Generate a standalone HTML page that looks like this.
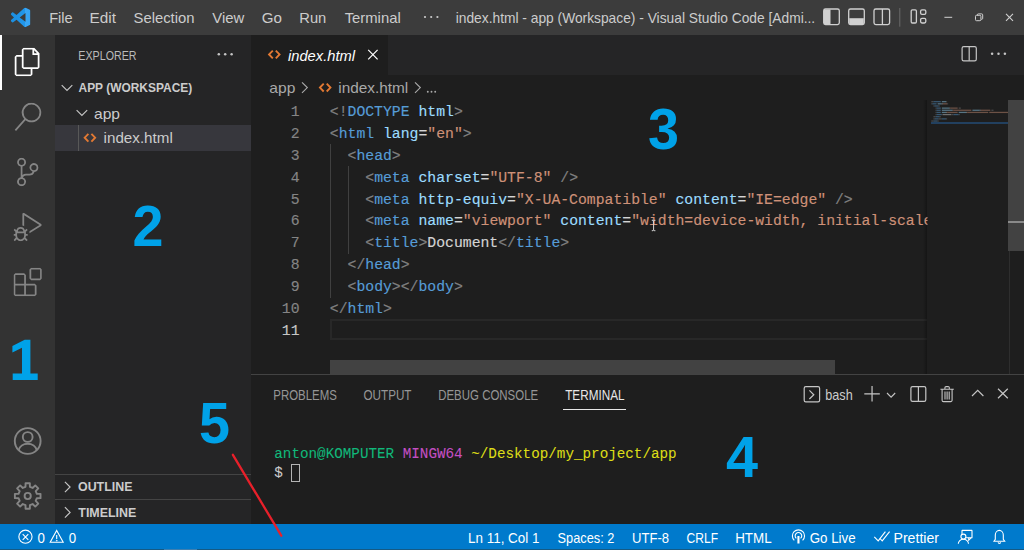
<!DOCTYPE html>
<html lang="en">
<head>
<meta charset="UTF-8">
<title>index.html - app (Workspace) - Visual Studio Code</title>
<style>
*{box-sizing:border-box;margin:0;padding:0}
html,body{width:1024px;height:550px;overflow:hidden;background:#1e1e1e;font-family:"Liberation Sans",sans-serif;color:#ccc}
.abs{position:absolute}
#titlebar{position:absolute;left:0;top:0;width:1024px;height:35px;background:#3c3c3c}
#activity{position:absolute;left:0;top:35px;width:56px;height:489px;background:#333333;border-right:1px solid #2c2c2c}
#activity .ind{position:absolute;left:0;top:0;width:2px;height:55px;background:#fff}
#sidebar{position:absolute;left:55px;top:35px;width:196px;height:489px;background:#252526}
#tabs{position:absolute;left:251px;top:35px;width:773px;height:40px;background:#252526}
#tab1{position:absolute;left:0;top:0;width:137px;height:40px;background:#1e1e1e}
#editor{position:absolute;left:251px;top:75px;width:773px;height:299px;background:#1e1e1e;overflow:hidden}
#panel{position:absolute;left:251px;top:374px;width:773px;height:150px;background:#1e1e1e;border-top:1px solid #434343}
#status{position:absolute;left:0;top:524px;width:1024px;height:26px;background:#007acc;border-bottom:1px solid #155a84}
#ov{position:absolute;left:0;top:0;width:1024px;height:550px}
#ov text{font-family:"Liberation Sans",sans-serif;white-space:pre}
#ov .mono text, #ov text.mono{font-family:"Liberation Mono",monospace}
.g{fill:#808080;stroke:#808080}.b{fill:#569cd6;stroke:#569cd6}.l{fill:#9cdcfe;stroke:#9cdcfe}.o{fill:#ce9178;stroke:#ce9178}.w{fill:#d4d4d4;stroke:#d4d4d4}
#ov .mono{stroke-width:0.15px}
</style>
</head>
<body>
<div id="titlebar"></div>
<div id="activity"><div class="ind"></div></div>
<div id="sidebar">
  <div class="abs" style="left:0;top:90px;width:196px;height:26px;background:#37373d"></div>
  <div class="abs" style="left:23px;top:90px;width:1px;height:26px;background:#585858"></div>
  <div class="abs" style="left:0;top:439px;width:196px;height:1px;background:#444"></div>
  <div class="abs" style="left:0;top:464px;width:196px;height:1px;background:#444"></div>
</div>
<div id="tabs"><div id="tab1"></div></div>
<div id="editor">
  <!-- indent guides -->
  <div class="abs" style="left:79px;top:69px;width:1px;height:154px;background:#404040"></div>
  <div class="abs" style="left:97px;top:91px;width:1px;height:88px;background:#404040"></div>
  <!-- current line -->
  <div class="abs" style="left:79px;top:244px;width:597px;height:21px;border:2px solid #282828;border-right:none"></div>
  <!-- horizontal scrollbar -->
  <div class="abs" style="left:79px;top:285px;width:505px;height:14px;background:#424242"></div>
  <!-- minimap -->
  <div class="abs" style="left:672px;top:25px;width:4px;height:274px;background:linear-gradient(to right,rgba(0,0,0,0),rgba(0,0,0,0.3))"></div>
  <div class="abs" style="left:676px;top:25px;width:82px;height:274px;background:#1e1e1e"></div>
  <div class="abs" style="left:680px;top:46.6px;width:78px;height:2.2px;background:#22405f"></div>
  <!-- vertical scrollbar -->
  <div class="abs" style="left:758px;top:25px;width:1px;height:274px;background:#2e2e2e"></div>
  <div class="abs" style="left:757px;top:25px;width:16px;height:151px;background:#424242"></div>
  <div class="abs" style="left:757px;top:146px;width:16px;height:2px;background:#8a8a8a"></div>
</div>
<div id="panel">
  <div class="abs" style="left:312px;top:34px;width:63px;height:1px;background:#e7e7e7"></div>
  <div class="abs" style="left:40px;top:89px;width:9px;height:18px;border:1px solid #b4b4b4"></div>
</div>
<div id="status"><div class="abs" style="left:164px;top:25px;width:33px;height:1px;background:#3d7fb0"></div></div>
<svg id="ov" width="1024" height="550" viewBox="0 0 1024 550">
<!-- TITLE BAR TEXT -->
<g font-size="15" fill="#cccccc">
<text x="49.2" y="23.3" textLength="23.5" lengthAdjust="spacingAndGlyphs">File</text>
<text x="89.5" y="23.3" textLength="26.5" lengthAdjust="spacingAndGlyphs">Edit</text>
<text x="133.5" y="23.3" textLength="61" lengthAdjust="spacingAndGlyphs">Selection</text>
<text x="212.3" y="23.3" textLength="32" lengthAdjust="spacingAndGlyphs">View</text>
<text x="261.7" y="23.3" textLength="20.2" lengthAdjust="spacingAndGlyphs">Go</text>
<text x="299.3" y="23.3" textLength="27" lengthAdjust="spacingAndGlyphs">Run</text>
<text x="344.7" y="23.3" textLength="56" lengthAdjust="spacingAndGlyphs">Terminal</text>
<text x="455.7" y="23.3" textLength="359.5" lengthAdjust="spacingAndGlyphs">index.html - app (Workspace) - Visual Studio Code [Admi...</text>
</g>
<!-- SIDEBAR TEXT -->
<text x="78.3" y="60.1" font-size="13.3" fill="#bbbbbb" textLength="58.3" lengthAdjust="spacingAndGlyphs">EXPLORER</text>
<text x="78.5" y="92.1" font-size="13.2" font-weight="bold" fill="#cccccc" textLength="113.7" lengthAdjust="spacingAndGlyphs">APP (WORKSPACE)</text>
<text x="94" y="119" font-size="15" fill="#cccccc" textLength="26" lengthAdjust="spacingAndGlyphs">app</text>
<text x="103.6" y="143.4" font-size="15" fill="#cccccc" textLength="69.2" lengthAdjust="spacingAndGlyphs">index.html</text>
<text x="78" y="491.4" font-size="13" font-weight="bold" fill="#cccccc" textLength="54.5" lengthAdjust="spacingAndGlyphs">OUTLINE</text>
<text x="78.3" y="516.8" font-size="13" font-weight="bold" fill="#cccccc" textLength="58" lengthAdjust="spacingAndGlyphs">TIMELINE</text>
<!-- TAB + BREADCRUMBS -->
<text x="288" y="60.8" font-size="15" font-style="italic" fill="#ffffff" textLength="67" lengthAdjust="spacingAndGlyphs">index.html</text>
<g font-size="15" fill="#a9a9a9">
<text x="269.3" y="92.6" textLength="26" lengthAdjust="spacingAndGlyphs">app</text>
<text x="338.3" y="92.6" textLength="70" lengthAdjust="spacingAndGlyphs">index.html</text>
</g>
<!-- PANEL TEXT -->
<g font-size="14" fill="#969696">
<text x="273.3" y="400.4" textLength="63.5" lengthAdjust="spacingAndGlyphs">PROBLEMS</text>
<text x="363.5" y="400.4" textLength="48" lengthAdjust="spacingAndGlyphs">OUTPUT</text>
<text x="438.2" y="400.4" textLength="100" lengthAdjust="spacingAndGlyphs">DEBUG CONSOLE</text>
<text x="565.2" y="400.4" fill="#e7e7e7" textLength="59.3" lengthAdjust="spacingAndGlyphs">TERMINAL</text>
</g>
<text x="825.2" y="399.7" font-size="14.5" fill="#cccccc" textLength="27.5" lengthAdjust="spacingAndGlyphs">bash</text>
<!-- TERMINAL -->
<g class="mono" font-size="14.27" style="stroke-width:0.08px">
<text x="274.3" y="457.9" xml:space="preserve"><tspan fill="#11b87a" stroke="#11b87a">anton@KOMPUTER</tspan> <tspan fill="#c44fc4" stroke="#c44fc4">MINGW64</tspan> <tspan fill="#dddd17" stroke="#dddd17">~/Desktop/my_project/app</tspan></text>
<text x="274.3" y="477.4" fill="#cccccc" stroke="#cccccc">$</text>
</g>
<!-- STATUS TEXT -->
<g font-size="14.3" fill="#ffffff">
<text x="37.4" y="542.9" textLength="7.4" lengthAdjust="spacingAndGlyphs">0</text>
<text x="68.8" y="542.9" textLength="7.4" lengthAdjust="spacingAndGlyphs">0</text>
<text x="468" y="542.9" textLength="71.5" lengthAdjust="spacingAndGlyphs">Ln 11, Col 1</text>
<text x="557.6" y="542.9" textLength="56.8" lengthAdjust="spacingAndGlyphs">Spaces: 2</text>
<text x="632" y="542.9" textLength="37" lengthAdjust="spacingAndGlyphs">UTF-8</text>
<text x="686.5" y="542.9" textLength="31.5" lengthAdjust="spacingAndGlyphs">CRLF</text>
<text x="735.2" y="542.9" textLength="36.5" lengthAdjust="spacingAndGlyphs">HTML</text>
<text x="809.7" y="542.9" textLength="46" lengthAdjust="spacingAndGlyphs">Go Live</text>
<text x="893.5" y="542.9" textLength="45.5" lengthAdjust="spacingAndGlyphs">Prettier</text>
</g>
<!-- CODE -->
<g class="mono" font-size="14.780">
<g fill="#858585" stroke="#858585" text-anchor="end">
<text x="299.5" y="116.10">1</text>
<text x="299.5" y="137.97">2</text>
<text x="299.5" y="159.84">3</text>
<text x="299.5" y="181.71">4</text>
<text x="299.5" y="203.58">5</text>
<text x="299.5" y="225.45">6</text>
<text x="299.5" y="247.32">7</text>
<text x="299.5" y="269.19">8</text>
<text x="299.5" y="291.06">9</text>
<text x="299.5" y="312.93">10</text>
<text x="299.5" y="334.80" fill="#c6c6c6" stroke="#c6c6c6">11</text>
</g>
<g class="w" xml:space="preserve">
<text x="329.80" y="116.10"><tspan class="g">&lt;!</tspan><tspan class="b">DOCTYPE</tspan> <tspan class="l">html</tspan><tspan class="g">&gt;</tspan></text>
<text x="329.80" y="137.97"><tspan class="g">&lt;</tspan><tspan class="b">html</tspan> <tspan class="l">lang</tspan>=<tspan class="o">"en"</tspan><tspan class="g">&gt;</tspan></text>
<text x="347.54" y="159.84"><tspan class="g">&lt;</tspan><tspan class="b">head</tspan><tspan class="g">&gt;</tspan></text>
<text x="365.27" y="181.71"><tspan class="g">&lt;</tspan><tspan class="b">meta</tspan> <tspan class="l">charset</tspan>=<tspan class="o">"UTF-8"</tspan> <tspan class="g">/&gt;</tspan></text>
<text x="365.27" y="203.58"><tspan class="g">&lt;</tspan><tspan class="b">meta</tspan> <tspan class="l">http-equiv</tspan>=<tspan class="o">"X-UA-Compatible"</tspan> <tspan class="l">content</tspan>=<tspan class="o">"IE=edge"</tspan> <tspan class="g">/&gt;</tspan></text>
<text x="365.27" y="225.45" clip-path="url(#clipcode)"><tspan class="g">&lt;</tspan><tspan class="b">meta</tspan> <tspan class="l">name</tspan>=<tspan class="o">"viewport"</tspan> <tspan class="l">content</tspan>=<tspan class="o">"width=device-width, initial-scale=1.0"</tspan> <tspan class="g">/&gt;</tspan></text>
<text x="365.27" y="247.32"><tspan class="g">&lt;</tspan><tspan class="b">title</tspan><tspan class="g">&gt;</tspan>Document<tspan class="g">&lt;/</tspan><tspan class="b">title</tspan><tspan class="g">&gt;</tspan></text>
<text x="347.54" y="269.19"><tspan class="g">&lt;/</tspan><tspan class="b">head</tspan><tspan class="g">&gt;</tspan></text>
<text x="347.54" y="291.06"><tspan class="g">&lt;</tspan><tspan class="b">body</tspan><tspan class="g">&gt;&lt;/</tspan><tspan class="b">body</tspan><tspan class="g">&gt;</tspan></text>
<text x="329.80" y="312.93"><tspan class="g">&lt;/</tspan><tspan class="b">html</tspan><tspan class="g">&gt;</tspan></text>
</g></g>
<g opacity="0.45" clip-path="url(#clipmm)">
<rect x="931.30" y="101.05" width="2.11" height="1.25" fill="#808080"/>
<rect x="933.41" y="101.05" width="7.38" height="1.25" fill="#569cd6"/>
<rect x="941.84" y="101.05" width="4.22" height="1.25" fill="#9cdcfe"/>
<rect x="946.06" y="101.05" width="1.05" height="1.25" fill="#808080"/>
<rect x="931.30" y="103.20" width="1.05" height="1.25" fill="#808080"/>
<rect x="932.35" y="103.20" width="4.22" height="1.25" fill="#569cd6"/>
<rect x="937.62" y="103.20" width="4.22" height="1.25" fill="#9cdcfe"/>
<rect x="941.84" y="103.20" width="1.05" height="1.25" fill="#d4d4d4"/>
<rect x="942.89" y="103.20" width="4.22" height="1.25" fill="#ce9178"/>
<rect x="947.11" y="103.20" width="1.05" height="1.25" fill="#808080"/>
<rect x="933.41" y="105.35" width="1.05" height="1.25" fill="#808080"/>
<rect x="934.46" y="105.35" width="4.22" height="1.25" fill="#569cd6"/>
<rect x="938.68" y="105.35" width="1.05" height="1.25" fill="#808080"/>
<rect x="935.52" y="107.50" width="1.05" height="1.25" fill="#808080"/>
<rect x="936.57" y="107.50" width="4.22" height="1.25" fill="#569cd6"/>
<rect x="941.84" y="107.50" width="7.38" height="1.25" fill="#9cdcfe"/>
<rect x="949.22" y="107.50" width="1.05" height="1.25" fill="#d4d4d4"/>
<rect x="950.27" y="107.50" width="7.38" height="1.25" fill="#ce9178"/>
<rect x="958.70" y="107.50" width="2.11" height="1.25" fill="#808080"/>
<rect x="935.52" y="109.65" width="1.05" height="1.25" fill="#808080"/>
<rect x="936.57" y="109.65" width="4.22" height="1.25" fill="#569cd6"/>
<rect x="941.84" y="109.65" width="10.54" height="1.25" fill="#9cdcfe"/>
<rect x="952.38" y="109.65" width="1.05" height="1.25" fill="#d4d4d4"/>
<rect x="953.43" y="109.65" width="17.92" height="1.25" fill="#ce9178"/>
<rect x="972.41" y="109.65" width="7.38" height="1.25" fill="#9cdcfe"/>
<rect x="979.78" y="109.65" width="1.05" height="1.25" fill="#d4d4d4"/>
<rect x="980.84" y="109.65" width="9.49" height="1.25" fill="#ce9178"/>
<rect x="991.38" y="109.65" width="2.11" height="1.25" fill="#808080"/>
<rect x="935.52" y="111.80" width="1.05" height="1.25" fill="#808080"/>
<rect x="936.57" y="111.80" width="4.22" height="1.25" fill="#569cd6"/>
<rect x="941.84" y="111.80" width="4.22" height="1.25" fill="#9cdcfe"/>
<rect x="946.06" y="111.80" width="1.05" height="1.25" fill="#d4d4d4"/>
<rect x="947.11" y="111.80" width="10.54" height="1.25" fill="#ce9178"/>
<rect x="958.70" y="111.80" width="7.38" height="1.25" fill="#9cdcfe"/>
<rect x="966.08" y="111.80" width="1.05" height="1.25" fill="#d4d4d4"/>
<rect x="967.14" y="111.80" width="21.08" height="1.25" fill="#ce9178"/>
<rect x="989.27" y="111.80" width="18.97" height="1.25" fill="#ce9178"/>
<rect x="1009.30" y="111.80" width="2.11" height="1.25" fill="#808080"/>
<rect x="935.52" y="113.95" width="1.05" height="1.25" fill="#808080"/>
<rect x="936.57" y="113.95" width="5.27" height="1.25" fill="#569cd6"/>
<rect x="941.84" y="113.95" width="1.05" height="1.25" fill="#808080"/>
<rect x="942.89" y="113.95" width="8.43" height="1.25" fill="#d4d4d4"/>
<rect x="951.33" y="113.95" width="2.11" height="1.25" fill="#808080"/>
<rect x="953.43" y="113.95" width="5.27" height="1.25" fill="#569cd6"/>
<rect x="958.70" y="113.95" width="1.05" height="1.25" fill="#808080"/>
<rect x="933.41" y="116.10" width="2.11" height="1.25" fill="#808080"/>
<rect x="935.52" y="116.10" width="4.22" height="1.25" fill="#569cd6"/>
<rect x="939.73" y="116.10" width="1.05" height="1.25" fill="#808080"/>
<rect x="933.41" y="118.25" width="1.05" height="1.25" fill="#808080"/>
<rect x="934.46" y="118.25" width="4.22" height="1.25" fill="#569cd6"/>
<rect x="938.68" y="118.25" width="3.16" height="1.25" fill="#808080"/>
<rect x="941.84" y="118.25" width="4.22" height="1.25" fill="#569cd6"/>
<rect x="946.06" y="118.25" width="1.05" height="1.25" fill="#808080"/>
<rect x="931.30" y="120.40" width="2.11" height="1.25" fill="#808080"/>
<rect x="933.41" y="120.40" width="4.22" height="1.25" fill="#569cd6"/>
<rect x="937.62" y="120.40" width="1.05" height="1.25" fill="#808080"/>
</g>
<defs><clipPath id="clipcode"><rect x="300" y="205" width="627.5" height="30"/></clipPath><clipPath id="clipmm"><rect x="927" y="99" width="81" height="40"/></clipPath></defs>
<!-- ICONS -->
<defs>
<symbol id="htmlic" viewBox="0 0 12.4 9.4" overflow="visible"><path d="M4.7 0.7 L0.95 4.6 L4.7 8.5 M7.7 0.7 L11.45 4.6 L7.7 8.5" fill="none" stroke="#e37933" stroke-width="1.9"/></symbol>
<linearGradient id="vsg" x1="0" y1="0" x2="1" y2="0"><stop offset="0" stop-color="#1b8fe0"/><stop offset="0.7" stop-color="#2196ea"/><stop offset="0.72" stop-color="#38a6f5"/><stop offset="1" stop-color="#35a3f3"/></linearGradient>
</defs>
<!-- vscode logo -->
<svg x="10.8" y="7.6" width="19.6" height="19.6" viewBox="0 0 100 100"><path fill="url(#vsg)" fill-rule="evenodd" d="M70.9119 99.3171C72.4869 99.9307 74.2828 99.8914 75.8725 99.1264L96.4608 89.2197C98.6242 88.1787 100 85.9892 100 83.5872V16.4133C100 14.0113 98.6243 11.8218 96.4609 10.7808L75.8725 0.873756C73.7862 -0.130129 71.3446 0.11576 69.5135 1.44695C69.252 1.63711 69.0028 1.84943 68.769 2.08341L29.3551 38.0415L12.1872 25.0096C10.589 23.7965 8.35363 23.8959 6.86933 25.2461L1.36303 30.2549C-0.452552 31.9064 -0.454633 34.7627 1.35853 36.417L16.2471 50.0001L1.35853 63.5832C-0.454633 65.2374 -0.452552 68.0938 1.36303 69.7453L6.86933 74.7541C8.35363 76.1043 10.589 76.2037 12.1872 74.9905L29.3551 61.9587L68.769 97.9167C69.3925 98.5406 70.1246 99.0104 70.9119 99.3171ZM75.0152 27.2989L45.1091 50.0001L75.0152 72.7012V27.2989Z"/></svg>
<!-- title bar dots -->
<g fill="#cccccc"><circle cx="425" cy="17" r="1.1"/><circle cx="431.2" cy="17" r="1.1"/><circle cx="437.4" cy="17" r="1.1"/></g>
<!-- layout controls -->
<g fill="none" stroke="#d0d0d0" stroke-width="1.3">
<rect x="823.7" y="9" width="15.6" height="15.6" rx="1.8"/><path d="M824 9.5h6.5v14.6h-6.5z" fill="#d0d0d0" stroke="none"/>
<rect x="848.7" y="9" width="15.6" height="15.6" rx="1.8"/><path d="M849.2 18.2h14.6v6h-14.6z" fill="#d0d0d0" stroke="none"/>
<rect x="874" y="9" width="15.6" height="15.6" rx="1.8"/><path d="M882.4 9v15.6"/>
<path d="M899.8 8v18.7" stroke="#6a6a6a" stroke-width="1"/>
<rect x="911.2" y="9.8" width="5.2" height="13.2" rx="1.2"/><rect x="920.6" y="9.8" width="5.2" height="4.6" rx="1.4"/><rect x="920.6" y="18.4" width="5.2" height="4.6" rx="1.4"/>
</g>
<!-- window controls -->
<g fill="none" stroke="#d0d0d0" stroke-width="1">
<path d="M944.4 17.3h7.8"/>
<rect x="975.5" y="15.3" width="5.4" height="5.4" rx="1"/><path d="M977.3 15.3v-0.4a1 1 0 0 1 1-1h3.4a1 1 0 0 1 1 1v3.4a1 1 0 0 1-1 1h-0.6"/>
<path d="M1006 13.8l7 7M1013 13.8l-7 7" stroke-width="1.1"/>
</g>
<!-- ACTIVITY BAR ICONS -->
<svg x="13.55" y="47.85" width="28.3" height="28.3" viewBox="0 0 24 24"><path fill="#ffffff" d="M17.5 0h-9L7 1.5V6H2.5L1 7.500v15.070L2.500 24h12.070L16 22.570V18h4.700l1.300-1.430V4.500L17.500 0zm0 2.120l2.380 2.380H17.500V2.120zm-3 20.380h-12v-15H7v9.070L8.500 18h6v4.500zm6-6h-12v-15H16V6h4.500v10.500z"/></svg>
<svg x="13.55" y="102.85" width="28.3" height="28.3" viewBox="0 0 24 24"><path fill="#858585" d="M15.250 0a8.250 8.250 0 0 0-6.180 13.720L1 22.880l1.120 1 8.050-9.120A8.251 8.251 0 1 0 15.250.010V0zm0 15a6.750 6.750 0 1 1 0-13.500 6.750 6.750 0 0 1 0 13.500z"/></svg>
<svg x="13.55" y="157.85" width="28.3" height="28.3" viewBox="0 0 24 24"><path fill="#858585" d="M21.007 8.222A3.738 3.738 0 0 0 15.045 5.200a3.737 3.737 0 0 0 1.156 6.583 2.988 2.988 0 0 1-2.668 1.670h-2.990a4.456 4.456 0 0 0-2.989 1.165V7.400a3.737 3.737 0 1 0-1.494 0v9.117a3.776 3.776 0 1 0 1.816.099 2.990 2.990 0 0 1 2.668-1.667h2.990a4.484 4.484 0 0 0 4.223-3.039 3.736 3.736 0 0 0 3.250-3.687zM4.565 3.738a2.242 2.242 0 1 1 4.484 0 2.242 2.242 0 0 1-4.484 0zm4.484 16.441a2.242 2.242 0 1 1-4.484 0 2.242 2.242 0 0 1 4.484 0zm8.221-9.715a2.242 2.242 0 1 1 0-4.485 2.242 2.242 0 0 1 0 4.485z"/></svg>
<svg x="13.55" y="212.85" width="28.3" height="28.3" viewBox="0 0 24 24"><path fill="#858585" d="M10.940 13.500l-1.320 1.320a3.730 3.730 0 0 0-7.240 0L1.060 13.500 0 14.560l1.720 1.720-.22.220V18H0v1.500h1.500v.080c.077.489.214.966.410 1.420L0 22.940 1.060 24l1.650-1.650A4.308 4.308 0 0 0 6 24a4.310 4.310 0 0 0 3.290-1.650L10.940 24 12 22.940 10.090 21c.198-.464.336-.951.410-1.450v-.1H12V18h-1.500v-1.500l-.22-.220L12 14.560l-1.060-1.060zM6 13.500a2.250 2.250 0 0 1 2.250 2.250h-4.500A2.250 2.250 0 0 1 6 13.500zm3 6a3.330 3.330 0 0 1-3 3 3.330 3.330 0 0 1-3-3v-2.250h6v2.250zm14.760-9.900v1.260L13.500 17.370V15.600l8.500-5.370L9 2v9.460a5.070 5.070 0 0 0-1.500-.72V.630L8.640 0l15.120 9.600z"/></svg>
<svg x="13.55" y="267.85" width="28.3" height="28.3" viewBox="0 0 24 24"><path fill="#858585" d="M13.500 1.500L15 0h7.500L24 1.500V9l-1.500 1.500H15L13.500 9V1.500zm1.500 0V9h7.500V1.500H15zM0 15V6l1.500-1.500H9L10.500 6v7.500H18l1.500 1.500v7.500L18 24H1.500L0 22.500V15zm9-1.500V6H1.500v7.500H9zM9 15H1.500v7.500H9V15zm1.500 7.500H18V15h-7.500v7.500z"/></svg>
<!-- account -->
<g fill="none" stroke="#858585" stroke-width="1.9">
<circle cx="27.7" cy="441" r="12.9"/><circle cx="27.7" cy="437" r="4.9"/><path d="M18.6 450.3a9.3 8.2 0 0 1 18.2 0"/>
</g>
<!-- gear -->
<g id="gear" fill="none" stroke="#858585" stroke-width="1.9" stroke-linejoin="round"><path d="M25.51 486.86 L25.55 483.18 L29.85 483.18 L29.89 486.86 L32.61 487.99 L35.25 485.42 L38.28 488.45 L35.71 491.09 L36.84 493.81 L40.52 493.85 L40.52 498.15 L36.84 498.19 L35.71 500.91 L38.28 503.55 L35.25 506.58 L32.61 504.01 L29.89 505.14 L29.85 508.82 L25.55 508.82 L25.51 505.14 L22.79 504.01 L20.15 506.58 L17.12 503.55 L19.69 500.91 L18.56 498.19 L14.88 498.15 L14.88 493.85 L18.56 493.81 L19.69 491.09 L17.12 488.45 L20.15 485.42 L22.79 487.99Z"/><circle cx="27.7" cy="496" r="3.1"/></g>
<!-- SMALL ICONS -->
<!-- sidebar dots -->
<g fill="#c5c5c5"><circle cx="218.8" cy="54.3" r="1.25"/><circle cx="225.2" cy="54.3" r="1.25"/><circle cx="231.6" cy="54.3" r="1.25"/></g>
<!-- editor actions dots -->
<g fill="#c5c5c5"><circle cx="992.1" cy="53.7" r="1.25"/><circle cx="998.5" cy="53.7" r="1.25"/><circle cx="1004.9" cy="53.7" r="1.25"/></g>
<!-- breadcrumb dots -->
<g fill="#a9a9a9"><circle cx="427.8" cy="91.7" r="0.95"/><circle cx="431.5" cy="91.7" r="0.95"/><circle cx="435.2" cy="91.7" r="0.95"/></g>
<!-- chevrons -->
<g fill="none" stroke="#c5c5c5" stroke-width="1.15">
<path d="M61.7 85.2l5.3 5.3 5.3-5.3"/>
<path d="M76.6 110.1l5.3 5.3 5.3-5.3"/>
<path d="M64.9 481.8l5.2 5.2-5.2 5.2"/>
<path d="M64.9 507.2l5.2 5.2-5.2 5.2"/>
</g>
<g fill="none" stroke="#a9a9a9" stroke-width="1.15">
<path d="M302 82.3l5.3 5.3-5.3 5.3"/>
<path d="M415 82.3l5.3 5.3-5.3 5.3"/>
</g>
<!-- html file icons -->
<use href="#htmlic" x="268.1" y="49.85" width="12.4" height="9.4"/>
<use href="#htmlic" x="319" y="83" width="12.4" height="9.4"/>
<use href="#htmlic" x="83.7" y="133.1" width="12.4" height="9.4"/>
<!-- tab close -->
<path d="M368.2 49.9l9.4 9.4M377.6 49.9l-9.4 9.4" stroke="#ffffff" stroke-width="1.2" fill="none"/>
<!-- split editor -->
<g fill="none" stroke="#c5c5c5" stroke-width="1.2"><rect x="962.1" y="46.6" width="14.2" height="14.2" rx="1.6"/><path d="M969.2 46.6v14.2"/></g>
<!-- PANEL ICONS -->
<g fill="none" stroke="#c5c5c5" stroke-width="1.2">
<rect x="804.2" y="386.7" width="15.4" height="15.2" rx="1.6"/><path d="M809.4 390.4l4.4 4.3-4.4 4.3"/>
<path d="M864.3 393.8h15.5M872.05 386.1v15.4"/>
<path d="M887 393l4.1 4.1 4.1-4.1" stroke-width="1.1"/>
<rect x="910.9" y="386.6" width="14.9" height="14.7" rx="1.6"/><path d="M918.4 386.6v14.7"/>
<path d="M940.4 389.2h13.4M944.9 389.2v-1.4a1.2 1.2 0 0 1 1.200-1.200h2a1.200 1.200 0 0 1 1.200 1.200v1.400M942.100 389.400v10.800a1.400 1.400 0 0 0 1.400 1.400h7.200a1.400 1.400 0 0 0 1.400-1.400v-10.800M945 391.500v8M947.100 391.500v8M949.200 391.500v8" stroke-width="1.1"/>
<path d="M972 396l5.700-5.600 5.700 5.600"/>
<path d="M998 388.700l9.800 9.600M1007.800 388.700l-9.800 9.600"/>
</g>
<!-- STATUS ICONS -->
<g fill="none" stroke="#ffffff" stroke-width="1.1">
<circle cx="25.45" cy="536.7" r="6.6"/><path d="M22.7 534.200l5.600 5.600M28.300 534.200l-5.600 5.600"/>
<path d="M56.700 530.400l6.500 11.900h-13zM56.700 535v4"/><circle cx="56.700" cy="540.500" r="0.300"/>
<path d="M794.300 540.400a6.100 6.100 0 1 1 8.300 0"/>
<path d="M796.300 538.300a3.300 3.300 0 1 1 4.300 0"/>
<path d="M798.450 536v7.500" stroke-width="2.1"/>
<path d="M874.300 536.800l3.900 4 7.200-9.200M879.600 538l2.600 2.800 7.400-9.200"/>
<rect x="962" y="530.400" width="10" height="7.400" rx="0.300"/>
<path d="M968.700 537.800l0 2.300 2.400-2.300" />
<path d="M958.300 543.800a5.100 4.600 0 0 1 10.200 0"/>
<path d="M994 541.300h10.700l-1.400-2v-4.300a4 4.600 0 0 0-8 0v4.300zM998.200 542.200a1.200 1.200 0 0 0 2.400 0"/>
</g>
<circle cx="963.400" cy="536.600" r="2.500" fill="#007acc" stroke="#ffffff" stroke-width="1.100"/>
<!-- I-beam cursor -->
<path d="M651.800 220.300h1.300l0.500 0.500 0.500-0.500h1.300M653.600 220.800v9.400M651.800 230.700h1.300l0.500-0.500 0.500 0.500h1.300" fill="none" stroke="#d8d8d8" stroke-width="1"/>
<!-- BIG NUMBERS -->
<g fill="#00a2e8" font-weight="bold" font-size="57">
<path d="M12.400 352.400v-6.300l12.300-6.300h5.700v33.700h7.300v6.500h-25v-6.500h9.300v-25.800z"/>
<text x="132.500" y="245.800" textLength="31" lengthAdjust="spacingAndGlyphs">2</text>
<text x="648" y="148.700" textLength="31" lengthAdjust="spacingAndGlyphs">3</text>
<text x="725.900" y="477.400" font-size="58" textLength="32" lengthAdjust="spacingAndGlyphs">4</text>
<text x="199" y="442.800" textLength="31" lengthAdjust="spacingAndGlyphs">5</text>
</g>
<!-- red arrow line -->
<path d="M232.900 454.800L281.300 535.700" stroke="#e8202a" stroke-width="2.300" stroke-linecap="round" fill="none"/>
</svg>
</body>
</html>
